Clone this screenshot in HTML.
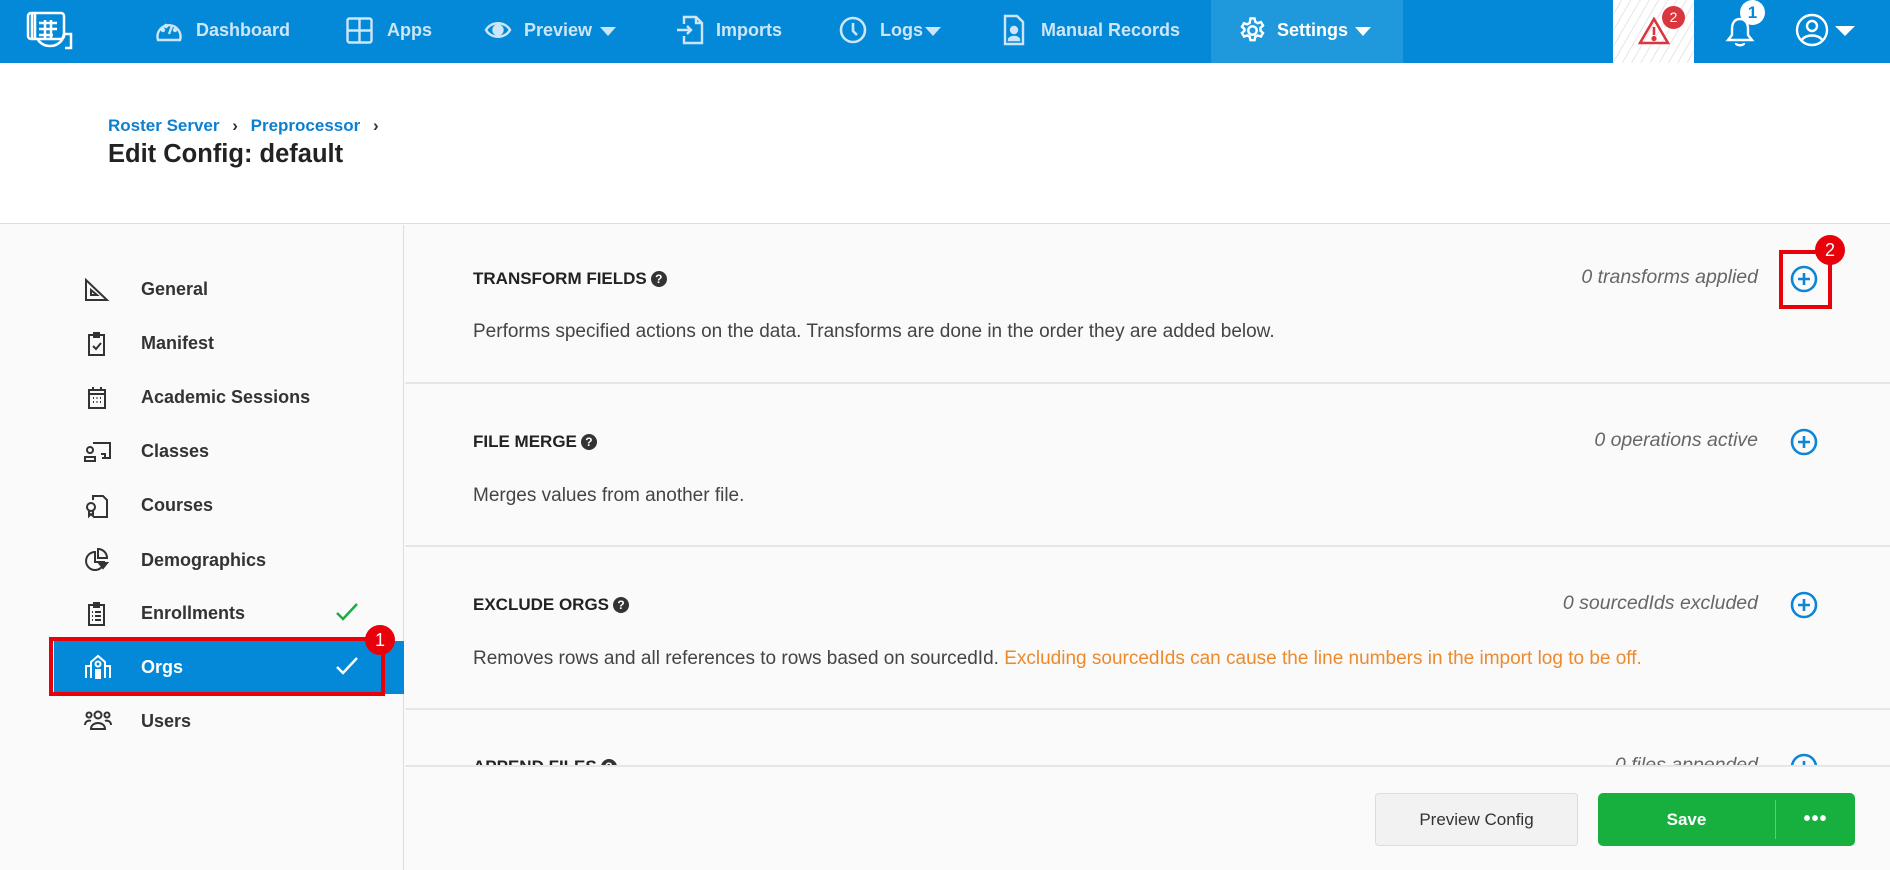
<!DOCTYPE html>
<html><head><meta charset="utf-8"><style>
*{box-sizing:border-box;margin:0;padding:0}
body{width:1890px;height:870px;overflow:hidden;background:#fafafa;font-family:"Liberation Sans",sans-serif;position:relative;color:#333}
.a{position:absolute}
.nav{left:0;top:0;width:1890px;height:63px;background:#0489d8}
.nt{position:absolute;top:0;height:63px;line-height:61px;font-size:18px;font-weight:bold;color:#cde6f7;white-space:nowrap}
.caret{position:absolute;top:27px;width:0;height:0;border-left:8px solid transparent;border-right:8px solid transparent;border-top:9px solid #cde6f7}
.ic{position:absolute}
.side{left:0;top:225px;width:404px;height:645px;background:#fafafa;border-right:1px solid #ddd}
.si{position:absolute;left:141px;font-size:18px;font-weight:bold;color:#333;line-height:24px}
.sic{position:absolute;left:84px}
.st{position:absolute;left:473px;font-size:17px;font-weight:bold;color:#222;line-height:20px}
.sd{position:absolute;left:473px;font-size:19px;color:#444;line-height:22px;white-space:nowrap}
.sr{position:absolute;right:132px;font-size:19.5px;font-style:italic;color:#666;line-height:22px}
.hl{position:absolute;left:405px;width:1485px;height:2px;background:#e6e6e6}
.q{display:inline-block;width:16px;height:16px;border-radius:50%;background:#333;color:#fff;font-size:12px;text-align:center;line-height:16px;vertical-align:1px;margin-left:4px}
</style></head><body>
<div class="a nav"></div>
<svg class="ic" style="left:26px;top:10px" width="48" height="40" viewBox="0 0 48 40" fill="none" stroke="#fff" stroke-width="2.5">
<rect x="2" y="3" width="36" height="26" rx="3"/><line x1="6" y1="3" x2="6" y2="29"/><line x1="9" y1="3" x2="9" y2="29"/>
<path d="M13 13h18M13 19h18M13 25h14M19 10v18M25 10v18"/>
<path d="M12 30c6 8 18 8 24 0l2-6h7v14h-6"/></svg>
<svg class="ic" style="left:155px;top:17px" width="28" height="26" viewBox="0 0 28 26" fill="none" stroke="#cde6f7" stroke-width="2.4"><path d="M3 23A11.5 11.5 0 1 1 25 23Z"/><path d="M14 17l3-8"/><circle cx="8" cy="13" r="1" fill="#cde6f7"/><circle cx="11" cy="9" r="1" fill="#cde6f7"/><circle cx="20" cy="13" r="1" fill="#cde6f7"/></svg>
<div class="nt" style="left:196px">Dashboard</div>
<svg class="ic" style="left:346px;top:17px" width="27" height="27" viewBox="0 0 27 27" fill="none" stroke="#cde6f7" stroke-width="2.4"><rect x="1.5" y="1.5" width="24" height="24" rx="2"/><path d="M13.5 1.5v24M1.5 13.5h24"/></svg>
<div class="nt" style="left:387px">Apps</div>
<svg class="ic" style="left:484px;top:19px" width="28" height="22" viewBox="0 0 28 22" fill="none" stroke="#cde6f7" stroke-width="2.4"><path d="M2 11C7 2 21 2 26 11C21 20 7 20 2 11Z"/><circle cx="14" cy="11" r="4.5" fill="#cde6f7"/></svg>
<div class="nt" style="left:524px">Preview</div><div class="caret" style="left:600px"></div>
<svg class="ic" style="left:676px;top:14px" width="28" height="32" viewBox="0 0 28 32" fill="none" stroke="#cde6f7" stroke-width="2.4"><path d="M8 10V3h12l6 6v20H8v-7"/><path d="M20 3v6h6"/><path d="M1 16h14M11 12l4 4-4 4"/></svg>
<div class="nt" style="left:716px">Imports</div>
<svg class="ic" style="left:839px;top:16px" width="28" height="28" viewBox="0 0 28 28" fill="none" stroke="#cde6f7" stroke-width="2.6"><circle cx="14" cy="14" r="12"/><path d="M14 7v8l4 4"/></svg>
<div class="nt" style="left:880px">Logs</div><div class="caret" style="left:925px"></div>
<svg class="ic" style="left:1003px;top:14px" width="22" height="32" viewBox="0 0 22 32" fill="none" stroke="#cde6f7" stroke-width="2.4"><path d="M2 2h12l6 6v22H2Z"/><circle cx="11" cy="16" r="3" fill="#cde6f7"/><path d="M6 26c0-4 10-4 10 0Z" fill="#cde6f7"/></svg>
<div class="nt" style="left:1041px">Manual Records</div>
<div class="a" style="left:1211px;top:0;width:192px;height:63px;background:#1f98dc"></div>
<svg class="ic" style="left:1238px;top:16px" width="29" height="29" viewBox="0 0 24 24" fill="none" stroke="#fff" stroke-width="2"><circle cx="12" cy="12" r="3.5"/><path d="M10.3 2h3.4l.6 2.8 2 1.1 2.7-.9 1.7 2.9-2.1 1.9v2.4l2.1 1.9-1.7 2.9-2.7-.9-2 1.1-.6 2.8h-3.4l-.6-2.8-2-1.1-2.7.9-1.7-2.9 2.1-1.9V10.8L3.3 8.9 5 6l2.7.9 2-1.1Z"/></svg>
<div class="nt" style="left:1277px;color:#fff">Settings</div><div class="caret" style="left:1355px;border-top-color:#fff"></div>
<div class="a" style="left:1613px;top:0;width:81px;height:63px;background:repeating-linear-gradient(120deg,#fff 0 7px,#e6e6e6 7px 8px)"></div>
<svg class="ic" style="left:1638px;top:17px" width="32" height="28" viewBox="0 0 32 28" fill="none" stroke="#d9363e" stroke-width="2.6"><path d="M16 2L30 26H2Z"/><path d="M16 10v8"/><circle cx="16" cy="21.5" r="1.3" fill="#d9363e"/></svg>
<div class="a" style="left:1662px;top:6px;width:23px;height:23px;border-radius:50%;background:#d9363e;color:#fff;font-size:14px;text-align:center;line-height:23px">2</div>
<svg class="ic" style="left:1725px;top:16px" width="30" height="32" viewBox="0 0 30 32" fill="none" stroke="#fff" stroke-width="2.4"><path d="M15 3c-6 0-8 5-8 10v6l-4 5h24l-4-5v-6c0-5-2-10-8-10Z"/><path d="M11 27c0 3 8 3 8 0"/></svg>
<div class="a" style="left:1740px;top:0px;width:25px;height:25px;border-radius:50%;background:#fff;color:#0489d8;font-weight:bold;font-size:17px;text-align:center;line-height:25px">1</div>
<svg class="ic" style="left:1795px;top:13px" width="34" height="34" viewBox="0 0 34 34" fill="none" stroke="#fff" stroke-width="2.4"><circle cx="17" cy="17" r="15"/><circle cx="17" cy="13" r="5"/><path d="M7 27c3-6 17-6 20 0"/></svg>
<div class="caret" style="left:1835px;border-top-color:#fff;border-left-width:10px;border-right-width:10px;border-top-width:10px;top:26px"></div>
<div class="a" style="left:0;top:63px;width:1890px;height:161px;background:#fff;border-bottom:1px solid #ddd"></div>
<div class="a" style="left:108px;top:116px;font-size:17px;font-weight:bold;color:#0d7fcf;white-space:nowrap">Roster Server <span style="color:#333;margin:0 8px">&#8250;</span> Preprocessor <span style="color:#333;margin-left:8px">&#8250;</span></div>
<div class="a" style="left:108px;top:140px;font-size:25.5px;font-weight:bold;color:#222">Edit Config: default</div>
<div class="a side"></div>
<div class="a" style="left:54px;top:641px;width:350px;height:53px;background:#0489d8"></div>
<div class="si" style="top:277px">General</div>
<div class="si" style="top:331px">Manifest</div>
<div class="si" style="top:385px">Academic Sessions</div>
<div class="si" style="top:439px">Classes</div>
<div class="si" style="top:493px">Courses</div>
<div class="si" style="top:548px">Demographics</div>
<div class="si" style="top:601px">Enrollments</div>
<div class="si" style="top:655px;color:#fff">Orgs</div>
<div class="si" style="top:709px">Users</div>
<svg class="sic" style="top:278px" width="26" height="24" viewBox="0 0 26 24" fill="none" stroke="#333" stroke-width="2"><path d="M2 2v20h21Z"/><path d="M7 12v5h6Z"/></svg>
<svg class="sic" style="top:331px" width="26" height="26" viewBox="0 0 26 26" fill="none" stroke="#333" stroke-width="2"><rect x="5" y="4" width="15" height="20"/><path d="M10 2h5v4h-5Z"/><path d="M9 15l3 3 5-6"/></svg>
<svg class="sic" style="top:385px" width="26" height="26" viewBox="0 0 26 26" fill="none" stroke="#333" stroke-width="2"><rect x="5" y="5" width="16" height="18"/><path d="M9 2v4M17 2v4M5 9h16" /><path d="M9 13h1M12.5 13h1M16 13h1M9 17h1M12.5 17h1M16 17h1"/></svg>
<svg class="sic" style="top:439px" width="28" height="26" viewBox="0 0 28 26" fill="none" stroke="#333" stroke-width="2"><path d="M9 4h17v15h-8"/><circle cx="6" cy="11" r="3"/><path d="M1 22h10v-4H1Z"/><path d="M17 15h4v4"/></svg>
<svg class="sic" style="top:493px" width="26" height="26" viewBox="0 0 26 26" fill="none" stroke="#333" stroke-width="2"><path d="M9 7V3h10l4 4v17H10"/><circle cx="7" cy="14" r="4"/><path d="M5 18v5l2-2 2 2v-5"/></svg>
<svg class="sic" style="top:547px" width="26" height="26" viewBox="0 0 26 26" fill="none" stroke="#333" stroke-width="2"><path d="M11 5a9 9 0 1 0 9 10h-9Z"/><path d="M14 2a9 9 0 0 1 9 9h-9Z"/><path d="M15 16h8l-4 5Z" fill="#333"/></svg>
<svg class="sic" style="top:601px" width="26" height="26" viewBox="0 0 26 26" fill="none" stroke="#333" stroke-width="2"><rect x="5" y="4" width="15" height="20"/><path d="M10 2h5v4h-5Z"/><path d="M8 11h1M11 11h6M8 15h1M11 15h6M8 19h1M11 19h6"/></svg>
<svg class="sic" style="top:654px" width="28" height="26" viewBox="0 0 28 26" fill="none" stroke="#fff" stroke-width="2"><path d="M7 24V8l7-6 7 6v16"/><path d="M2 24V12h5M26 24V12h-5"/><circle cx="14" cy="10" r="2.5"/><rect x="12" y="16" width="4" height="8" fill="#fff"/></svg>
<svg class="sic" style="top:709px" width="28" height="24" viewBox="0 0 28 24" fill="none" stroke="#333" stroke-width="2"><circle cx="14" cy="6" r="3.5"/><circle cx="5" cy="6" r="2.5"/><circle cx="23" cy="6" r="2.5"/><path d="M7 20c0-8 14-8 14 0Z"/><path d="M1 16c0-4 4-5 6-4M27 16c0-4-4-5-6-4"/></svg>
<svg class="a" style="left:335px;top:601px" width="24" height="22" viewBox="0 0 24 22" fill="none" stroke="#1aad3e" stroke-width="2.5"><path d="M2 12l6 6L22 3"/></svg>
<svg class="a" style="left:335px;top:655px" width="24" height="22" viewBox="0 0 24 22" fill="none" stroke="#fff" stroke-width="2.5"><path d="M2 12l6 6L22 3"/></svg>
<div class="a" style="left:49px;top:637px;width:336px;height:59px;border:4px solid #e8000b"></div>
<div class="a" style="left:365px;top:625px;width:30px;height:30px;border-radius:50%;background:#e8000b;color:#fff;font-size:18px;text-align:center;line-height:30px">1</div>
<div class="st" style="top:269px">TRANSFORM FIELDS<span class="q">?</span></div>
<div class="sd" style="top:321px">Performs specified actions on the data. Transforms are done in the order they are added below.</div>
<div class="sr" style="top:266px">0 transforms applied</div>
<div class="hl" style="top:382px"></div>
<div class="st" style="top:432px">FILE MERGE<span class="q">?</span></div>
<div class="sd" style="top:485px">Merges values from another file.</div>
<div class="sr" style="top:429px">0 operations active</div>
<div class="hl" style="top:545px"></div>
<div class="st" style="top:595px">EXCLUDE ORGS<span class="q">?</span></div>
<div class="sd" style="top:648px">Removes rows and all references to rows based on sourcedId. <span style="color:#ec8a2c">Excluding sourcedIds can cause the line numbers in the import log to be off.</span></div>
<div class="sr" style="top:592px">0 sourcedIds excluded</div>
<div class="hl" style="top:708px"></div>
<div class="st" style="top:757px">APPEND FILES<span class="q">?</span></div>
<div class="sr" style="top:754px">0 files appended</div>
<svg class="a" style="left:1790px;top:265px" width="28" height="28" viewBox="0 0 28 28" fill="none" stroke="#0d85d6" stroke-width="2.6"><circle cx="14" cy="14" r="12"/><path d="M14 8v12M8 14h12"/></svg>
<svg class="a" style="left:1790px;top:428px" width="28" height="28" viewBox="0 0 28 28" fill="none" stroke="#0d85d6" stroke-width="2.6"><circle cx="14" cy="14" r="12"/><path d="M14 8v12M8 14h12"/></svg>
<svg class="a" style="left:1790px;top:591px" width="28" height="28" viewBox="0 0 28 28" fill="none" stroke="#0d85d6" stroke-width="2.6"><circle cx="14" cy="14" r="12"/><path d="M14 8v12M8 14h12"/></svg>
<svg class="a" style="left:1790px;top:753px" width="28" height="28" viewBox="0 0 28 28" fill="none" stroke="#0d85d6" stroke-width="2.6"><circle cx="14" cy="14" r="12"/><path d="M14 8v12M8 14h12"/></svg>
<div class="a" style="left:1779px;top:250px;width:53px;height:59px;border:4px solid #e8000b"></div>
<div class="a" style="left:1815px;top:235px;width:30px;height:30px;border-radius:50%;background:#e8000b;color:#fff;font-size:18px;text-align:center;line-height:30px">2</div>
<div class="a" style="left:405px;top:765px;width:1485px;height:105px;background:#fafafa;border-top:2px solid #e6e6e6"></div>
<div class="a" style="left:1375px;top:793px;width:203px;height:53px;background:#f2f2f2;border:1px solid #dcdcdc;border-radius:4px;text-align:center;line-height:51px;font-size:17px;color:#333">Preview Config</div>
<div class="a" style="left:1598px;top:793px;width:257px;height:53px;background:#17b03f;border-radius:5px"></div>
<div class="a" style="left:1598px;top:793px;width:177px;height:53px;text-align:center;line-height:53px;font-size:17px;font-weight:bold;color:#fff">Save</div>
<div class="a" style="left:1775px;top:800px;width:1px;height:39px;background:#5fcb7a"></div>
<div class="a" style="left:1776px;top:793px;width:79px;height:53px;text-align:center;line-height:53px;font-size:20px;font-weight:bold;color:#fff;letter-spacing:1px">•••</div>
</body></html>
